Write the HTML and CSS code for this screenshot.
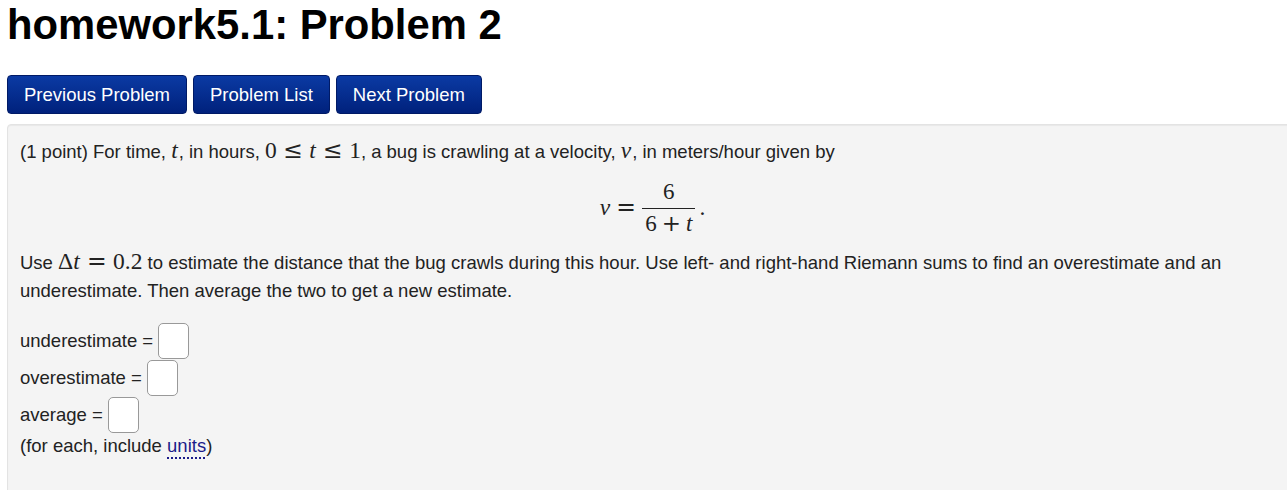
FILE: index.html
```html
<!DOCTYPE html>
<html lang="en">
<head>
    <meta charset="UTF-8">
    <meta name="viewport" content="width=device-width, initial-scale=1.0">
    <title>homework5.1: Problem 2</title>
    <link rel="stylesheet" href="styles.css">
</head>
<body>
    <h1 class="page-title">homework5.1: Problem 2</h1>

    <div class="nav-buttons">
        <a class="btn btn-primary" href="#">Previous Problem</a>
        <a class="btn btn-primary" href="#">Problem List</a>
        <a class="btn btn-primary" href="#">Next Problem</a>
    </div>

    <div class="problem well">
        <p class="problem-text">
            (1 point) For time, <span class="math"><i>t</i></span>, in hours,
            <span class="math">0<span class="rel">&le;</span><i>t</i><span class="rel">&le;</span>1</span>,
            a bug is crawling at a velocity, <span class="math"><i>v</i></span>, in meters/hour given by
        </p>

        <div class="display-math">
            <span class="math"><i>v</i><span class="rel">=</span></span>
            <span class="frac">
                <span class="num">6</span>
                <span class="den">6<span class="bin">+</span><i>t</i></span>
            </span>
            <span class="math period">.</span>
        </div>

        <p class="problem-text">
            Use <span class="math">&Delta;<i>t</i><span class="rel">=</span>0.2</span> to estimate the distance that the bug crawls during this hour. Use left- and right-hand Riemann sums to find an overestimate and an underestimate. Then average the two to get a new estimate.
        </p>

        <div class="answers">
            <div class="answer-row">
                <label for="ans1">underestimate =</label>
                <input type="text" id="ans1" class="answer-input">
            </div>
            <div class="answer-row">
                <label for="ans2">overestimate =</label>
                <input type="text" id="ans2" class="answer-input">
            </div>
            <div class="answer-row">
                <label for="ans3">average =</label>
                <input type="text" id="ans3" class="answer-input">
            </div>
            <div class="help-line">(for each, include <a class="units-link" href="#">units</a>)</div>
        </div>
    </div>
</body>
</html>
```

FILE: styles.css
```css
html, body {
    overflow: hidden;
}

body {
    margin: 0;
    padding: 0 7px;
    font-family: "Liberation Sans", Arial, sans-serif;
    font-size: 18.5px;
    color: #222;
    background-color: white;
}

.page-title {
    margin: 2px 0 0;
    font-size: 41.8px;
    line-height: 46px;
    font-weight: bold;
    color: #000;
}

.nav-buttons {
    display: flex;
    gap: 6px;
    margin-top: 27px;
}

.btn {
    display: inline-flex;
    align-items: center;
    height: 39px;
    padding: 0 16px;
    box-sizing: border-box;
    border-radius: 4px;
    font-size: 18.5px;
    text-decoration: none;
    color: white;
}

.btn-primary {
    background-image: linear-gradient(to bottom, #0b3aa3, #00217c);
    border: 1px solid #001a66;
}

.well {
    margin-top: 10px;
    margin-right: -30px;
    min-height: 420px;
    padding: 13px 12px 30px;
    background-color: #f4f4f4;
    border: 1px solid #e3e3e3;
    border-radius: 4px;
    box-shadow: inset 0 1px 1px rgba(0,0,0,0.05);
}

.problem-text {
    margin: 0;
    line-height: 28px;
}

.math {
    font-family: "Liberation Serif", "Times New Roman", serif;
    font-size: 23.5px;
    line-height: 1;
    white-space: nowrap;
}

.math i {
    padding-right: 1px;
}

.rel,
.bin {
    font-family: "DejaVu Serif", serif;
}

.rel {
    margin: 0 0.27em;
}

.display-math {
    display: flex;
    justify-content: center;
    align-items: center;
    height: 83px;
    padding-right: 12px;
}

.display-math .rel {
    margin: 0 0.22em;
}

.frac {
    display: inline-flex;
    flex-direction: column;
    align-items: center;
    margin-left: 1px;
    font-family: "Liberation Serif", "Times New Roman", serif;
    font-size: 23px;
    line-height: 24px;
}

.num {
    padding: 0 4px 4px;
}

.den {
    padding: 2px 3px 0;
    border-top: 1px solid #222;
}

.bin {
    margin: 0 0.22em;
}

.period {
    align-self: center;
    margin-left: 4px;
}

.answers {
    margin-top: 17px;
}

.answer-row {
    display: flex;
    align-items: center;
    height: 37px;
}

.answer-input {
    width: 31px;
    height: 36px;
    box-sizing: border-box;
    margin: 0 0 0 5px;
    padding: 0 4px;
    border: 1px solid #999;
    border-radius: 5px;
    background: white;
}

.help-line {
    line-height: 28px;
    margin-top: -1px;
}

.units-link {
    color: #1b1b8a;
    text-decoration: underline dotted 2px;
    text-underline-offset: 5px;
}
```
